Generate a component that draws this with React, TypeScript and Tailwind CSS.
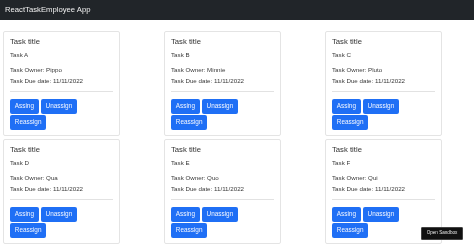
const tasks = [
  { name: 'Task A', owner: 'Pippo', due: '11/11/2022' },
  { name: 'Task B', owner: 'Minnie', due: '11/11/2022' },
  { name: 'Task C', owner: 'Pluto', due: '11/11/2022' },
  { name: 'Task D', owner: 'Qua', due: '11/11/2022' },
  { name: 'Task E', owner: 'Quo', due: '11/11/2022' },
  { name: 'Task F', owner: 'Qui', due: '11/11/2022' },
];

function Btn({ label }: { label: string }) {
  return (
    <button className="h-[15px] px-[4.8px] rounded-[2px] bg-[#1f6ff5] text-[#f2f6ff] text-[6.4px] leading-none">
      {label}
    </button>
  );
}

function TaskCard({ task }: { task: (typeof tasks)[number] }) {
  return (
    <div className="w-[117px] h-[105px] border border-[#e4e4e4] rounded-[2px] bg-white p-[6px]">
      <h5 className="text-[7.7px] leading-[8px] text-[#333]">Task title</h5>
      <p className="mt-[4px] text-[6.2px] leading-[9px]">{task.name}</p>
      <p className="mt-[6px] text-[6.2px] leading-[10.5px]">Task Owner: {task.owner}</p>
      <p className="text-[6.2px] leading-[10.5px]">Task Due date: {task.due}</p>
      <hr className="mt-[4.5px] border-t border-[#e2e2e2]" />
      <div className="mt-[7px] flex flex-col gap-[1px]">
        <div className="flex gap-[2px]">
          <Btn label="Assing" />
          <Btn label="Unassign" />
        </div>
        <div className="flex">
          <Btn label="Reassign" />
        </div>
      </div>
    </div>
  );
}

export default function App() {
  return (
    <div
      className="relative w-[474px] h-[248px] bg-white text-[#3a3a3a] overflow-hidden will-change-transform"
      style={{ fontFamily: '"Liberation Sans", Arial, sans-serif' }}
    >
      <nav className="h-[20px] bg-[#212529] flex items-center px-[5px]">
        <span className="text-[#f0f0f0] text-[7.7px]">ReactTaskEmployee App</span>
      </nav>

      <div className="grid grid-cols-[repeat(3,161px)] gap-y-[3px] pl-[3px] pt-[11px]">
        {tasks.map(t => (
          <TaskCard key={t.name} task={t} />
        ))}
      </div>

      {/* sandbox overlay */}
      <div className="absolute right-[11px] bottom-[8px] h-[13px] w-[42px] flex items-center justify-center bg-[#111111] border border-[#444] rounded-[1px] text-[#e8e8e8] text-[4.6px]">
        Open Sandbox
      </div>
    </div>
  );
}
